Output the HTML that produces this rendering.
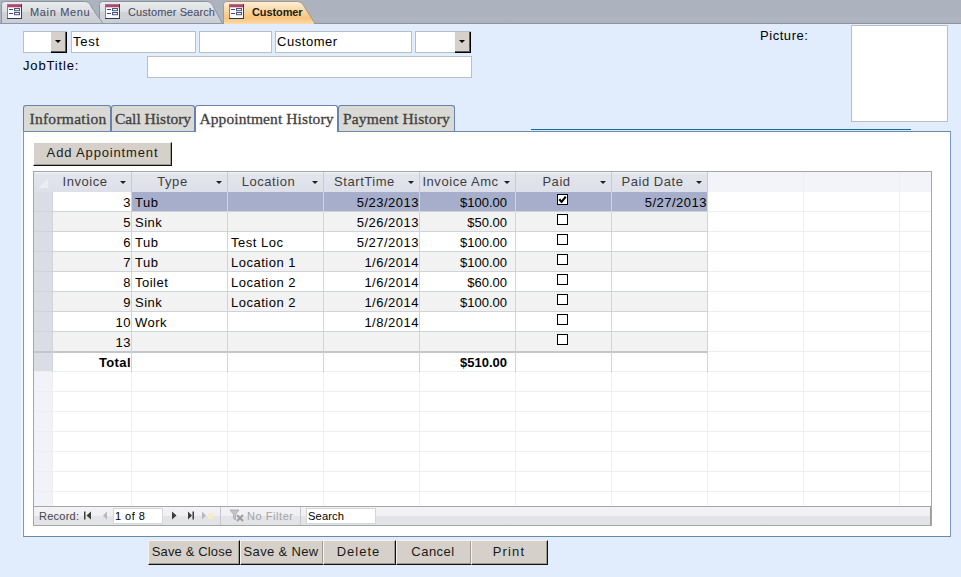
<!DOCTYPE html>
<html><head><meta charset="utf-8">
<style>
*{margin:0;padding:0;box-sizing:border-box}
html,body{width:961px;height:577px;overflow:hidden;background:#E1ECFD;font-family:"Liberation Sans",sans-serif;position:relative}
.a,.t,.ftab,.btn,.btn2,.hd,.arr,.cl,.cr,.cb{position:absolute}
.t{white-space:nowrap;color:#000;line-height:18px}
.ftab{top:105px;border:1px solid #6683B0;border-bottom:none;border-radius:3px 3px 0 0;font-family:"Liberation Serif",serif;font-size:15.5px;color:#3F3F3F;-webkit-text-stroke:0.3px #3F3F3F;line-height:25px;text-align:center;white-space:nowrap}
.btn{background:#D5D1CA;border-top:1px solid #fff;border-left:1px solid #fff;border-right:1px solid #111;border-bottom:1px solid #111;box-shadow:inset -1px -1px 0 #A09C94;font-size:13px;color:#1A1A1A;text-align:center;white-space:nowrap}
.btn2{top:540px;height:25px;line-height:22px;background:#D5D1CA;border-top:1px solid #F4F2EE;border-left:1px solid #F4F2EE;border-right:1px solid #111;border-bottom:1px solid #111;box-shadow:inset -1px -1px 0 #A09C94;font-size:13px;color:#1A1A1A;text-align:center;white-space:nowrap}
.hd{height:20px;line-height:20px;text-align:center;font-size:13px;letter-spacing:0.55px;color:#3E3E3E;white-space:nowrap}
.arr{width:0;height:0;border-left:3px solid transparent;border-right:3px solid transparent;border-top:3.5px solid #1E1E1E}
.cl,.cr{height:19px;line-height:21px;font-size:13px;letter-spacing:0.5px;color:#000;white-space:nowrap}
.cr{text-align:right}
.cb{width:11px;height:11px;border:1.5px solid #000;background:#fff}
</style></head><body>
<svg class="a" style="left:0;top:0" width="961" height="24">
<defs>
<linearGradient id="gs" x1="0" y1="0" x2="0" y2="1"><stop offset="0" stop-color="#ACB3BE"/><stop offset="0.7" stop-color="#ACB3BE"/><stop offset="0.8" stop-color="#B0B7C2"/><stop offset="0.9" stop-color="#ABB2BD"/><stop offset="1" stop-color="#ABB2BD"/></linearGradient>
<linearGradient id="gt" x1="0" y1="0" x2="0" y2="1"><stop offset="0" stop-color="#E9EBEE"/><stop offset="0.45" stop-color="#DCDFE3"/><stop offset="0.5" stop-color="#CFD3D8"/><stop offset="1" stop-color="#CACED4"/></linearGradient>
<linearGradient id="go" x1="0" y1="0" x2="0" y2="1"><stop offset="0" stop-color="#FDF0DA"/><stop offset="0.4" stop-color="#FAD9A6"/><stop offset="0.75" stop-color="#F8C47C"/><stop offset="1" stop-color="#FBD9A8"/></linearGradient>
</defs>
<rect x="0" y="0" width="961" height="24" fill="url(#gs)"/>

<path d="M99.5 23.5 V4.5 Q99.5 1.5 102.5 1.5 H206 C211 1.5 212 4 214 8 L222.5 23.5 Z" fill="url(#gt)" stroke="#8F959E" stroke-width="1"/>
<path d="M1.5 23.5 V4.5 Q1.5 1.5 4.5 1.5 H84 C89 1.5 90 4 92 8 L103 23.5 Z" fill="url(#gt)" stroke="#8F959E" stroke-width="1"/>
<path d="M223.5 23.5 V4.5 Q223.5 1.5 226.5 1.5 H296 C301 1.5 303 4 305 8 L315 23.5 Z" fill="url(#go)" stroke="#A99A82" stroke-width="1"/>
<rect x="0" y="23" width="961" height="1" fill="#8E96A0"/><rect x="0" y="24" width="961" height="1" fill="#EAF0FC"/>
<rect x="224" y="23" width="90" height="1" fill="#FBD9A8"/>
</svg>
<svg class="a" style="left:7px;top:4px" width="15" height="15" viewBox="0 0 15 15">
<rect x="0" y="0" width="15" height="15" fill="#FAFAFD"/>
<rect x="0" y="0" width="15" height="1" fill="#B86A88"/>
<rect x="0" y="0" width="1" height="15" fill="#7C8098"/>
<rect x="1" y="1" width="13" height="2" fill="#A84A70"/>
<rect x="1" y="3" width="13" height="1" fill="#E9C6D3"/>
<rect x="0" y="14" width="15" height="1" fill="#2F3550"/>
<rect x="14" y="0" width="1" height="15" fill="#3A3F5A"/>
<rect x="2" y="5" width="4" height="1" fill="#454C6C"/><rect x="2" y="9" width="4" height="1" fill="#454C6C"/>
<rect x="7.5" y="4.5" width="5" height="2.2" fill="#E8EEF8" stroke="#4E5A7C" stroke-width="1"/>
<rect x="7.5" y="8.5" width="5" height="2.2" fill="#E8EEF8" stroke="#4E5A7C" stroke-width="1"/>
</svg>
<svg class="a" style="left:105px;top:4px" width="15" height="15" viewBox="0 0 15 15">
<rect x="0" y="0" width="15" height="15" fill="#FAFAFD"/>
<rect x="0" y="0" width="15" height="1" fill="#B86A88"/>
<rect x="0" y="0" width="1" height="15" fill="#7C8098"/>
<rect x="1" y="1" width="13" height="2" fill="#A84A70"/>
<rect x="1" y="3" width="13" height="1" fill="#E9C6D3"/>
<rect x="0" y="14" width="15" height="1" fill="#2F3550"/>
<rect x="14" y="0" width="1" height="15" fill="#3A3F5A"/>
<rect x="2" y="5" width="4" height="1" fill="#454C6C"/><rect x="2" y="9" width="4" height="1" fill="#454C6C"/>
<rect x="7.5" y="4.5" width="5" height="2.2" fill="#E8EEF8" stroke="#4E5A7C" stroke-width="1"/>
<rect x="7.5" y="8.5" width="5" height="2.2" fill="#E8EEF8" stroke="#4E5A7C" stroke-width="1"/>
</svg>
<svg class="a" style="left:229px;top:4px" width="15" height="15" viewBox="0 0 15 15">
<rect x="0" y="0" width="15" height="15" fill="#FAFAFD"/>
<rect x="0" y="0" width="15" height="1" fill="#B86A88"/>
<rect x="0" y="0" width="1" height="15" fill="#7C8098"/>
<rect x="1" y="1" width="13" height="2" fill="#A84A70"/>
<rect x="1" y="3" width="13" height="1" fill="#E9C6D3"/>
<rect x="0" y="14" width="15" height="1" fill="#2F3550"/>
<rect x="14" y="0" width="1" height="15" fill="#3A3F5A"/>
<rect x="2" y="5" width="4" height="1" fill="#454C6C"/><rect x="2" y="9" width="4" height="1" fill="#454C6C"/>
<rect x="7.5" y="4.5" width="5" height="2.2" fill="#E8EEF8" stroke="#4E5A7C" stroke-width="1"/>
<rect x="7.5" y="8.5" width="5" height="2.2" fill="#E8EEF8" stroke="#4E5A7C" stroke-width="1"/>
</svg>
<div class="t" style="left:30px;top:3px;font-size:11px;color:#45475C;letter-spacing:0.65px">Main Menu</div>
<div class="t" style="left:128px;top:3px;font-size:11px;color:#45475C;letter-spacing:0.1px">Customer Search</div>
<div class="t" style="left:252px;top:3px;font-size:11px;color:#1E1A12;font-weight:bold;letter-spacing:-0.1px">Customer</div>
<div class="a" style="left:23px;top:31px;width:44px;height:22px;background:#fff;border:1px solid #B9BEC7"></div>
<div class="a" style="left:51px;top:32px;width:16px;height:21px;background:#D5D1CA;border-right:1px solid #000;border-bottom:1px solid #000;box-shadow:inset -1px -1px 0 #5A5A5A"></div>
<div class="a" style="left:55px;top:40px;width:0;height:0;border-left:3.5px solid transparent;border-right:3.5px solid transparent;border-top:3.5px solid #000"></div>
<div class="a" style="left:71px;top:31px;width:125px;height:22px;background:#fff;border:1px solid #B9BEC7"></div>
<div class="t" style="left:73px;top:33px;font-size:13px;letter-spacing:0.75px">Test</div>
<div class="a" style="left:199px;top:31px;width:73px;height:22px;background:#fff;border:1px solid #B9BEC7"></div>
<div class="a" style="left:275px;top:31px;width:137px;height:22px;background:#fff;border:1px solid #B9BEC7"></div>
<div class="t" style="left:277px;top:33px;font-size:13px;letter-spacing:0.55px">Customer</div>
<div class="a" style="left:415px;top:31px;width:56px;height:22px;background:#fff;border:1px solid #B9BEC7"></div>
<div class="a" style="left:455px;top:32px;width:16px;height:21px;background:#D5D1CA;border-right:1px solid #000;border-bottom:1px solid #000;box-shadow:inset -1px -1px 0 #5A5A5A"></div>
<div class="a" style="left:459px;top:40px;width:0;height:0;border-left:3.5px solid transparent;border-right:3.5px solid transparent;border-top:3.5px solid #000"></div>
<div class="t" style="left:23px;top:57px;font-size:13px;letter-spacing:0.85px">JobTitle:</div>
<div class="a" style="left:147px;top:56px;width:325px;height:22px;background:#fff;border:1px solid #B9BEC7"></div>
<div class="t" style="left:760px;top:27px;font-size:13px;letter-spacing:0.55px">Picture:</div>
<div class="a" style="left:851px;top:25px;width:97px;height:97px;background:#fff;border:1px solid #B9BEC7"></div>
<div class="a" style="left:531px;top:128px;width:380px;height:1px;background:#D2F4FC"></div>
<div class="a" style="left:531px;top:129px;width:380px;height:1px;background:#2A6296"></div>
<div class="a" style="left:531px;top:130px;width:380px;height:1px;background:#CDEFFB"></div>
<div class="a" style="left:23px;top:131px;width:928px;height:406px;background:#fff;border:1px solid #6A8AAA;border-left-color:#7C9AC6;border-right-color:#7C9AC6"></div>
<div class="a" style="left:21px;top:131px;width:2px;height:406px;background:#E9F2FE"></div>
<div class="ftab" style="left:23px;width:88px;height:26px;background:#D9D9D5;letter-spacing:0.28px;padding-left:2px">Information</div>
<div class="ftab" style="left:111px;width:84px;height:26px;background:#D9D9D5;letter-spacing:0px;padding-left:0px">Call History</div>
<div class="ftab" style="left:338px;width:117px;height:26px;background:#D9D9D5;letter-spacing:0.15px;padding-left:0px">Payment History</div>
<div class="ftab" style="left:195px;width:143px;height:27px;background:#fff;letter-spacing:0.1px;padding-left:0px">Appointment History</div>
<div class="btn" style="left:33px;top:142px;width:139px;height:24px;line-height:19px;letter-spacing:0.85px">Add Appointment</div>
<div class="a" style="left:33px;top:171px;width:899px;height:355px;background:#fff;border:1px solid #A6A6A6"></div>
<div class="a" style="left:34px;top:172px;width:673px;height:20px;background:linear-gradient(#EEF0F4 0px,#EEF0F4 1px,#E2E5EC 2px,#DDE0E9 20px)"></div>
<div class="a" style="left:707px;top:172px;width:224px;height:20px;background:#F2F4FA"></div>
<div class="a" style="left:34px;top:192px;width:18px;height:180px;background:#DADDE3"></div>
<div class="a" style="left:34px;top:372px;width:18px;height:134px;background:#F1F3F8"></div>
<svg class="a" style="left:36px;top:176px" width="14" height="14"><path d="M1.5 12.5 L12.5 1.5 L12.5 12.5 Z" fill="#EBEDF2" stroke="#DDE0E6" stroke-width="0.6"/></svg>
<div class="a" style="left:52px;top:192px;width:655px;height:19px;background:#FFFFFF"></div>
<div class="a" style="left:132px;top:192px;width:575px;height:19px;background:#A6AECB"></div>
<div class="a" style="left:52px;top:212px;width:655px;height:19px;background:#F2F2F2"></div>
<div class="a" style="left:52px;top:232px;width:655px;height:19px;background:#FFFFFF"></div>
<div class="a" style="left:52px;top:252px;width:655px;height:19px;background:#F2F2F2"></div>
<div class="a" style="left:52px;top:272px;width:655px;height:19px;background:#FFFFFF"></div>
<div class="a" style="left:52px;top:292px;width:655px;height:19px;background:#F2F2F2"></div>
<div class="a" style="left:52px;top:312px;width:655px;height:19px;background:#FFFFFF"></div>
<div class="a" style="left:52px;top:332px;width:655px;height:19px;background:#F2F2F2"></div>
<div class="a" style="left:52px;top:353px;width:655px;height:18px;background:#fff"></div>
<div class="a" style="left:34px;top:211px;width:673px;height:1px;background:#D0D3D9"></div>
<div class="a" style="left:34px;top:231px;width:673px;height:1px;background:#D0D3D9"></div>
<div class="a" style="left:34px;top:251px;width:673px;height:1px;background:#D0D3D9"></div>
<div class="a" style="left:34px;top:271px;width:673px;height:1px;background:#D0D3D9"></div>
<div class="a" style="left:34px;top:291px;width:673px;height:1px;background:#D0D3D9"></div>
<div class="a" style="left:34px;top:311px;width:673px;height:1px;background:#D0D3D9"></div>
<div class="a" style="left:34px;top:331px;width:673px;height:1px;background:#D0D3D9"></div>
<div class="a" style="left:34px;top:351px;width:673px;height:2px;background:#C3C6CD"></div>
<div class="a" style="left:34px;top:371px;width:673px;height:1px;background:#D0D3D9"></div>
<div class="a" style="left:708px;top:211px;width:223px;height:1px;background:#EDEEF2"></div>
<div class="a" style="left:708px;top:231px;width:223px;height:1px;background:#EDEEF2"></div>
<div class="a" style="left:708px;top:251px;width:223px;height:1px;background:#EDEEF2"></div>
<div class="a" style="left:708px;top:271px;width:223px;height:1px;background:#EDEEF2"></div>
<div class="a" style="left:708px;top:291px;width:223px;height:1px;background:#EDEEF2"></div>
<div class="a" style="left:708px;top:311px;width:223px;height:1px;background:#EDEEF2"></div>
<div class="a" style="left:708px;top:331px;width:223px;height:1px;background:#EDEEF2"></div>
<div class="a" style="left:708px;top:351px;width:223px;height:1px;background:#EDEEF2"></div>
<div class="a" style="left:34px;top:371px;width:897px;height:1px;background:#EDEEF2"></div>
<div class="a" style="left:34px;top:391px;width:897px;height:1px;background:#EDEEF2"></div>
<div class="a" style="left:34px;top:411px;width:897px;height:1px;background:#EDEEF2"></div>
<div class="a" style="left:34px;top:431px;width:897px;height:1px;background:#EDEEF2"></div>
<div class="a" style="left:34px;top:451px;width:897px;height:1px;background:#EDEEF2"></div>
<div class="a" style="left:34px;top:471px;width:897px;height:1px;background:#EDEEF2"></div>
<div class="a" style="left:34px;top:491px;width:897px;height:1px;background:#EDEEF2"></div>
<div class="a" style="left:52px;top:192px;width:1px;height:180px;background:#D0D3D9"></div>
<div class="a" style="left:52px;top:372px;width:1px;height:134px;background:#EDEEF2"></div>
<div class="a" style="left:131px;top:172px;width:1px;height:20px;background:#C6CAD2"></div>
<div class="a" style="left:131px;top:192px;width:1px;height:180px;background:#D0D3D9"></div>
<div class="a" style="left:131px;top:372px;width:1px;height:134px;background:#EDEEF2"></div>
<div class="a" style="left:227px;top:172px;width:1px;height:20px;background:#C6CAD2"></div>
<div class="a" style="left:227px;top:192px;width:1px;height:180px;background:#D0D3D9"></div>
<div class="a" style="left:227px;top:372px;width:1px;height:134px;background:#EDEEF2"></div>
<div class="a" style="left:323px;top:172px;width:1px;height:20px;background:#C6CAD2"></div>
<div class="a" style="left:323px;top:192px;width:1px;height:180px;background:#D0D3D9"></div>
<div class="a" style="left:323px;top:372px;width:1px;height:134px;background:#EDEEF2"></div>
<div class="a" style="left:419px;top:172px;width:1px;height:20px;background:#C6CAD2"></div>
<div class="a" style="left:419px;top:192px;width:1px;height:180px;background:#D0D3D9"></div>
<div class="a" style="left:419px;top:372px;width:1px;height:134px;background:#EDEEF2"></div>
<div class="a" style="left:515px;top:172px;width:1px;height:20px;background:#C6CAD2"></div>
<div class="a" style="left:515px;top:192px;width:1px;height:180px;background:#D0D3D9"></div>
<div class="a" style="left:515px;top:372px;width:1px;height:134px;background:#EDEEF2"></div>
<div class="a" style="left:611px;top:172px;width:1px;height:20px;background:#C6CAD2"></div>
<div class="a" style="left:611px;top:192px;width:1px;height:180px;background:#D0D3D9"></div>
<div class="a" style="left:611px;top:372px;width:1px;height:134px;background:#EDEEF2"></div>
<div class="a" style="left:707px;top:172px;width:1px;height:20px;background:#C6CAD2"></div>
<div class="a" style="left:707px;top:192px;width:1px;height:180px;background:#D0D3D9"></div>
<div class="a" style="left:707px;top:372px;width:1px;height:134px;background:#EDEEF2"></div>
<div class="a" style="left:803px;top:172px;width:1px;height:334px;background:#EDEEF2"></div>
<div class="a" style="left:899px;top:172px;width:1px;height:334px;background:#EDEEF2"></div>
<div class="hd" style="left:53px;top:172px;width:64px">Invoice</div>
<div class="arr" style="left:120px;top:181px"></div>
<div class="hd" style="left:132px;top:172px;width:81px">Type</div>
<div class="arr" style="left:216px;top:181px"></div>
<div class="hd" style="left:228px;top:172px;width:81px">Location</div>
<div class="arr" style="left:312px;top:181px"></div>
<div class="hd" style="left:324px;top:172px;width:81px">StartTime</div>
<div class="arr" style="left:408px;top:181px"></div>
<div class="hd" style="left:420px;top:172px;width:81px">Invoice Amc</div>
<div class="arr" style="left:504px;top:181px"></div>
<div class="hd" style="left:516px;top:172px;width:81px">Paid</div>
<div class="arr" style="left:600px;top:181px"></div>
<div class="hd" style="left:612px;top:172px;width:81px">Paid Date</div>
<div class="arr" style="left:696px;top:181px"></div>
<div class="cr" style="left:52px;top:192px;width:79px">3</div>
<div class="cl" style="left:135px;top:192px">Tub</div>
<div class="cl" style="left:231px;top:192px"></div>
<div class="cr" style="left:323px;top:192px;width:96px">5/23/2013</div>
<div class="cr" style="left:419px;top:192px;width:88px;letter-spacing:0px">$100.00</div>
<div class="cb" style="left:557px;top:194px"><svg width="9" height="9" style="position:absolute;left:0;top:0"><path d="M1.3 4.3 L3.6 6.8 L7.8 1.6" fill="none" stroke="#000" stroke-width="2.1"/></svg></div>
<div class="cr" style="left:611px;top:192px;width:96px">5/27/2013</div>
<div class="cr" style="left:52px;top:212px;width:79px">5</div>
<div class="cl" style="left:135px;top:212px">Sink</div>
<div class="cl" style="left:231px;top:212px"></div>
<div class="cr" style="left:323px;top:212px;width:96px">5/26/2013</div>
<div class="cr" style="left:419px;top:212px;width:88px;letter-spacing:0px">$50.00</div>
<div class="cb" style="left:557px;top:214px"></div>
<div class="cr" style="left:611px;top:212px;width:96px"></div>
<div class="cr" style="left:52px;top:232px;width:79px">6</div>
<div class="cl" style="left:135px;top:232px">Tub</div>
<div class="cl" style="left:231px;top:232px">Test Loc</div>
<div class="cr" style="left:323px;top:232px;width:96px">5/27/2013</div>
<div class="cr" style="left:419px;top:232px;width:88px;letter-spacing:0px">$100.00</div>
<div class="cb" style="left:557px;top:234px"></div>
<div class="cr" style="left:611px;top:232px;width:96px"></div>
<div class="cr" style="left:52px;top:252px;width:79px">7</div>
<div class="cl" style="left:135px;top:252px">Tub</div>
<div class="cl" style="left:231px;top:252px">Location 1</div>
<div class="cr" style="left:323px;top:252px;width:96px">1/6/2014</div>
<div class="cr" style="left:419px;top:252px;width:88px;letter-spacing:0px">$100.00</div>
<div class="cb" style="left:557px;top:254px"></div>
<div class="cr" style="left:611px;top:252px;width:96px"></div>
<div class="cr" style="left:52px;top:272px;width:79px">8</div>
<div class="cl" style="left:135px;top:272px">Toilet</div>
<div class="cl" style="left:231px;top:272px">Location 2</div>
<div class="cr" style="left:323px;top:272px;width:96px">1/6/2014</div>
<div class="cr" style="left:419px;top:272px;width:88px;letter-spacing:0px">$60.00</div>
<div class="cb" style="left:557px;top:274px"></div>
<div class="cr" style="left:611px;top:272px;width:96px"></div>
<div class="cr" style="left:52px;top:292px;width:79px">9</div>
<div class="cl" style="left:135px;top:292px">Sink</div>
<div class="cl" style="left:231px;top:292px">Location 2</div>
<div class="cr" style="left:323px;top:292px;width:96px">1/6/2014</div>
<div class="cr" style="left:419px;top:292px;width:88px;letter-spacing:0px">$100.00</div>
<div class="cb" style="left:557px;top:294px"></div>
<div class="cr" style="left:611px;top:292px;width:96px"></div>
<div class="cr" style="left:52px;top:312px;width:79px">10</div>
<div class="cl" style="left:135px;top:312px">Work</div>
<div class="cl" style="left:231px;top:312px"></div>
<div class="cr" style="left:323px;top:312px;width:96px">1/8/2014</div>
<div class="cr" style="left:419px;top:312px;width:88px;letter-spacing:0px"></div>
<div class="cb" style="left:557px;top:314px"></div>
<div class="cr" style="left:611px;top:312px;width:96px"></div>
<div class="cr" style="left:52px;top:332px;width:79px">13</div>
<div class="cl" style="left:135px;top:332px"></div>
<div class="cl" style="left:231px;top:332px"></div>
<div class="cr" style="left:323px;top:332px;width:96px"></div>
<div class="cr" style="left:419px;top:332px;width:88px;letter-spacing:0px"></div>
<div class="cb" style="left:557px;top:334px"></div>
<div class="cr" style="left:611px;top:332px;width:96px"></div>
<div class="cr" style="left:52px;top:352px;width:79px;font-weight:bold;letter-spacing:0.4px">Total</div>
<div class="cr" style="left:419px;top:352px;width:88px;font-weight:bold;letter-spacing:0px">$510.00</div>
<div class="a" style="left:34px;top:506px;width:897px;height:19px;background:linear-gradient(#F3F3F5 0%,#F0F0F3 48%,#E3E4E8 52%,#E2E3E7 100%);border-top:1px solid #A6A6A6;border-right:1px solid #9C9C9C"></div>
<div class="t" style="left:39px;top:508px;font-size:11px;color:#454545;line-height:16px;letter-spacing:0.25px">Record:</div>
<svg class="a" style="left:84px;top:511px" width="8" height="9"><rect x="0" y="0.5" width="1.5" height="8" fill="#3C3C3C"/><path d="M7 0.5 V8.5 L2.5 4.5 Z" fill="#3C3C3C"/></svg>
<svg class="a" style="left:102px;top:511px" width="6" height="9"><path d="M5 0.5 V8.5 L1 4.5 Z" fill="#B9B9BD"/></svg>
<div class="a" style="left:113px;top:508px;width:50px;height:16px;background:#fff;border:1px solid #D5D6DA"></div>
<div class="t" style="left:115px;top:508px;font-size:11px;color:#000;line-height:17px;letter-spacing:0.45px">1 of 8</div>
<svg class="a" style="left:171px;top:511px" width="6" height="9"><path d="M1 0.5 V8.5 L5.5 4.5 Z" fill="#3C3C3C"/></svg>
<svg class="a" style="left:187px;top:511px" width="8" height="9"><path d="M1 0.5 V8.5 L5 4.5 Z" fill="#3C3C3C"/><rect x="5.5" y="0.5" width="1.5" height="8" fill="#3C3C3C"/></svg>
<svg class="a" style="left:201px;top:510px" width="14" height="11"><path d="M1 1.5 V9.5 L5 5.5 Z" fill="#B9B9BD"/><rect x="7" y="3" width="5" height="6" fill="#F4ECCB"/></svg>
<div class="a" style="left:220px;top:507px;width:1px;height:18px;background:#C7C8CC"></div>
<svg class="a" style="left:229px;top:508px" width="16" height="15"><path d="M1 2 H10 L6.5 6.5 V12 L4.5 10.5 V6.5 Z" fill="#C4C4C8" stroke="#A8A8AC" stroke-width="0.8"/><path d="M8 7 L14 13 M14 7 L8 13" stroke="#9C9CA0" stroke-width="1.8"/></svg>
<div class="t" style="left:247px;top:508px;font-size:11px;color:#A3A3A6;line-height:17px;letter-spacing:0.55px">No Filter</div>
<div class="a" style="left:300px;top:507px;width:1px;height:18px;background:#C7C8CC"></div>
<div class="a" style="left:306px;top:508px;width:70px;height:16px;background:#fff;border:1px solid #D5D6DA"></div>
<div class="t" style="left:308px;top:508px;font-size:11.2px;color:#000;line-height:16px;letter-spacing:0.1px">Search</div>
<div class="btn2" style="left:148px;width:92px;letter-spacing:0.15px;padding-right:4px">Save &amp; Close</div>
<div class="btn2" style="left:240px;width:84px;letter-spacing:0.33px;padding-right:2px">Save &amp; New</div>
<div class="btn2" style="left:323px;width:73px;letter-spacing:1.0px;padding-right:2px">Delete</div>
<div class="btn2" style="left:396px;width:76px;letter-spacing:0.5px;padding-right:2px">Cancel</div>
<div class="btn2" style="left:471px;width:77px;letter-spacing:1.2px;padding-right:1px">Print</div>
</body></html>
